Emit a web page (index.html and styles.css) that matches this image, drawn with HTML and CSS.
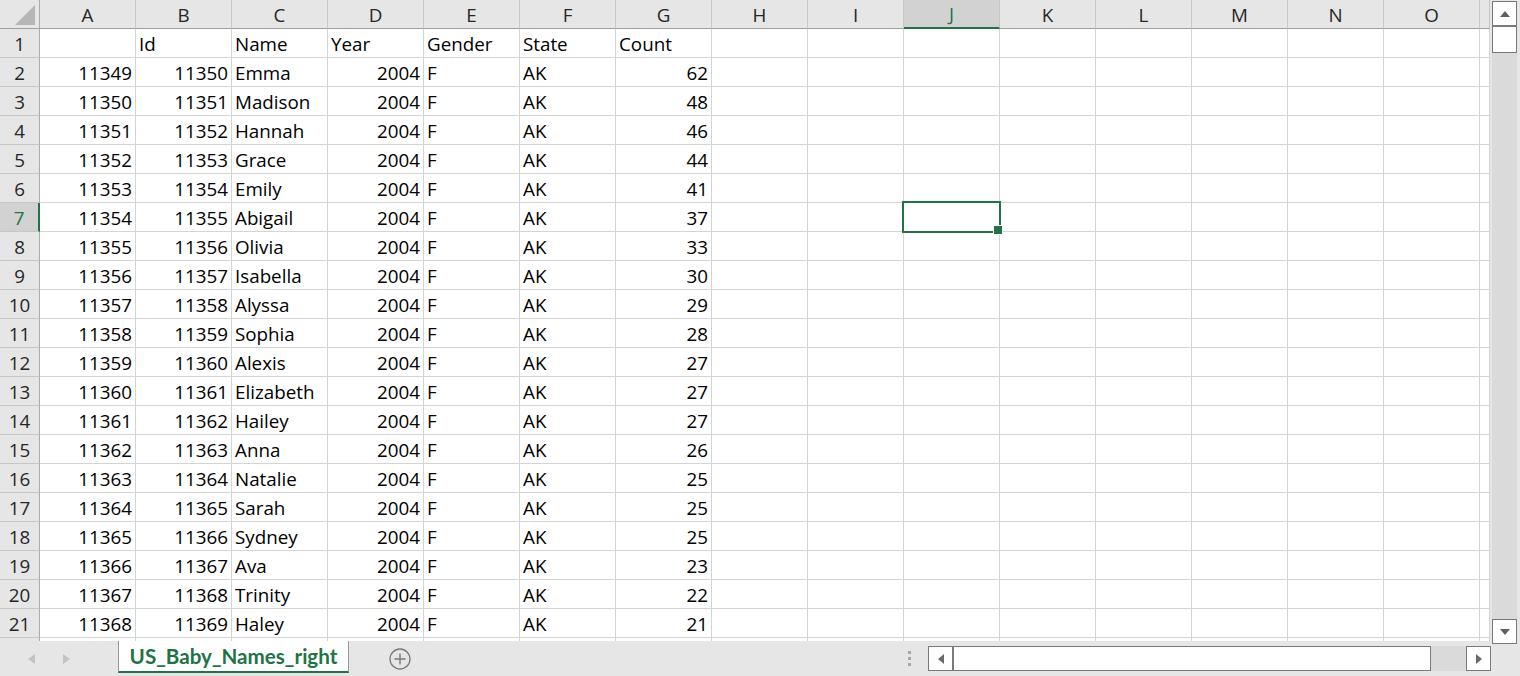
FILE: index.html
```html
<!DOCTYPE html>
<html lang="en">
<head>
    <meta charset="UTF-8">
    <title>US_Baby_Names_right</title>
    <link rel="stylesheet" href="styles.css">
</head>
<body>

    <div class="app">
        <div class="main">
            <div class="sheet">
                <div class="grid" id="grid"></div>
            </div>
            <div class="vscroll">
                <div class="sb-btn"><span class="arrow-up"></span></div>
                <div class="sb-thumb"></div>
                <div class="sb-track"></div>
                <div class="sb-btn"><span class="arrow-down"></span></div>
            </div>
        </div>

        <div class="tabbar">
            <div class="tab-nav">
                <span class="nav-arrow prev"></span>
                <span class="nav-arrow next"></span>
            </div>
            <div class="tab">US_Baby_Names_right</div>
            <div class="add-sheet">
                <svg width="22" height="22" viewBox="0 0 22 22">
                    <circle cx="11" cy="11" r="10" fill="none" stroke="#7a7a7a" stroke-width="1.3"/>
                    <path d="M11 5.5v11M5.5 11h11" stroke="#7a7a7a" stroke-width="1.4"/>
                </svg>
            </div>
            <div class="split-dots"><i></i><i></i><i></i></div>
            <div class="hscroll">
                <div class="sb-btn"><span class="arrow-left"></span></div>
                <div class="sb-thumb"></div>
                <div class="sb-track"></div>
                <div class="sb-btn"><span class="arrow-right"></span></div>
            </div>
        </div>
    </div>

    <script>
        document.addEventListener('DOMContentLoaded', () => {
            const grid = document.getElementById('grid');
            const letters = 'ABCDEFGHIJKLMNO'.split('');

            // --- Sheet data ---
            const names = [
                ['Emma', 62], ['Madison', 48], ['Hannah', 46], ['Grace', 44], ['Emily', 41],
                ['Abigail', 37], ['Olivia', 33], ['Isabella', 30], ['Alyssa', 29], ['Sophia', 28],
                ['Alexis', 27], ['Elizabeth', 27], ['Hailey', 27], ['Anna', 26], ['Natalie', 25],
                ['Sarah', 25], ['Sydney', 25], ['Ava', 23], ['Trinity', 22], ['Haley', 21]
            ];
            const rows = [['', 'Id', 'Name', 'Year', 'Gender', 'State', 'Count']];
            names.forEach(([name, count], i) => {
                rows.push([11349 + i, 11350 + i, name, 2004, 'F', 'AK', count]);
            });

            const cell = (cls, text) => {
                const div = document.createElement('div');
                div.className = cls;
                if (text !== undefined) div.textContent = text;
                grid.appendChild(div);
            };

            // column headers
            cell('corner');
            letters.forEach(l => cell(l === 'J' ? 'ch active' : 'ch', l));
            cell('ch');

            // rows
            rows.forEach((row, r) => {
                cell(r === 6 ? 'rh active' : 'rh', r + 1);
                letters.forEach((l, c) => {
                    const value = row[c];
                    let cls = 'c';
                    if (typeof value === 'number') cls += ' num';
                    if (r === 6 && l === 'J') cls += ' selected';
                    cell(cls, value === undefined ? '' : value);
                });
                cell('c');
            });

            // partly hidden row under the last one
            cell('rh');
            letters.forEach(() => cell('c'));
            cell('c');
        });
    </script>

</body>
</html>
```

FILE: styles.css
```css
* {
    box-sizing: border-box;
}
body {
    margin: 0;
    background-color: #e6e6e6;
    font-family: "Open Sans", "Liberation Sans", sans-serif;
    overflow: hidden;
}
.app {
    width: 1520px;
    height: 676px;
    display: flex;
    flex-direction: column;
}
.main {
    display: flex;
    height: 641px;
    flex: none;
}
.sheet {
    width: 1490px;
    height: 641px;
    overflow: hidden;
    background: #fff;
}

/* grid */
.grid {
    display: grid;
    grid-template-columns: 40px repeat(15, 96px) 10px;
    grid-auto-rows: 29px;
    font-size: 18.8px;
    color: #000;
}
.grid > div {
    border-right: 1px solid #d4d4d4;
    border-bottom: 1px solid #d4d4d4;
    padding: 2px 3px 0;
    line-height: 26px;
    white-space: nowrap;
    overflow: hidden;
}
.grid .num {
    text-align: right;
}
.grid .corner {
    background: #e6e6e6;
    border-right-color: #ababab;
    border-bottom-color: #9f9f9f;
    display: flex;
    justify-content: flex-end;
    align-items: flex-end;
    padding: 0 4px 3px 0;
}
.grid .corner::after {
    content: "";
    border-left: 20px solid transparent;
    border-bottom: 20px solid #b6b6b6;
}
.grid .ch {
    background: #e6e6e6;
    text-align: center;
    color: #262626;
    border-right-color: #c6c6c6;
    border-bottom-color: #9f9f9f;
}
.grid .ch.active {
    background: #d2d2d2;
    color: #217346;
    border-bottom: 2px solid #217346;
    line-height: 25px;
}
.grid .rh {
    background: #e6e6e6;
    text-align: center;
    color: #262626;
    border-right-color: #ababab;
    border-bottom-color: #c6c6c6;
}
.grid .rh.active {
    background: #d2d2d2;
    color: #217346;
    border-right: 2px solid #217346;
}
.grid .selected {
    position: relative;
    overflow: visible;
}
.grid .selected::before {
    content: "";
    position: absolute;
    inset: -2px;
    border: 2px solid #217346;
}
.grid .selected::after {
    content: "";
    position: absolute;
    right: -4px;
    bottom: -4px;
    width: 8px;
    height: 8px;
    background: #217346;
    border: 1px solid #fff;
}

/* scroll bars */
.sb-btn {
    width: 25px;
    height: 25px;
    flex: none;
    border: 1px solid #7a7a7a;
    background: #fff;
    display: flex;
    align-items: center;
    justify-content: center;
}
.sb-thumb {
    border: 1px solid #7a7a7a;
    background: #fff;
    flex: none;
}
.sb-track {
    background: #dadada;
}
.vscroll {
    width: 30px;
    height: 645px;
    flex: none;
    display: flex;
    flex-direction: column;
    padding: 1px 3px 1px 2px;
    position: relative;
    z-index: 1;
    background: #e6e6e6;
}
.vscroll .sb-thumb {
    height: 27px;
}
.vscroll .sb-track {
    flex: 1;
}
.arrow-up, .arrow-down {
    border-left: 5.5px solid transparent;
    border-right: 5.5px solid transparent;
}
.arrow-up {
    border-bottom: 6px solid #606060;
}
.arrow-down {
    border-top: 6px solid #606060;
}
.arrow-left, .arrow-right {
    border-top: 5.5px solid transparent;
    border-bottom: 5.5px solid transparent;
}
.arrow-left {
    border-right: 6px solid #6a6a6a;
}
.arrow-right {
    border-left: 6px solid #6a6a6a;
}

/* sheet tabs */
.tabbar {
    flex: 1;
    display: flex;
    align-items: center;
    padding-right: 29px;
}
.tab-nav {
    width: 118px;
    flex: none;
    display: flex;
    align-items: center;
    gap: 28px;
    padding-left: 28px;
}
.nav-arrow {
    border-top: 5px solid transparent;
    border-bottom: 5px solid transparent;
}
.nav-arrow.prev {
    border-right: 7px solid #c3c3c3;
}
.nav-arrow.next {
    border-left: 7px solid #c3c3c3;
}
.tab {
    align-self: flex-start;
    width: 231px;
    height: 32px;
    flex: none;
    background: #fff;
    border-left: 1px solid #9a9a9a;
    border-right: 1px solid #9a9a9a;
    border-bottom: 2px solid #217346;
    color: #217346;
    font-family: Lato, "Open Sans", sans-serif;
    font-weight: bold;
    font-size: 20.6px;
    line-height: 30px;
    text-align: center;
}
.add-sheet {
    margin-left: 40px;
    display: flex;
}
.split-dots {
    margin-left: auto;
    margin-right: 17px;
    display: flex;
    flex-direction: column;
    gap: 3px;
}
.split-dots i {
    width: 3px;
    height: 3px;
    background: #a6a6a6;
}
.hscroll {
    align-self: flex-start;
    margin-top: 5px;
    display: flex;
    height: 25px;
}
.hscroll .sb-thumb {
    width: 478px;
}
.hscroll .sb-track {
    width: 35px;
}
```
